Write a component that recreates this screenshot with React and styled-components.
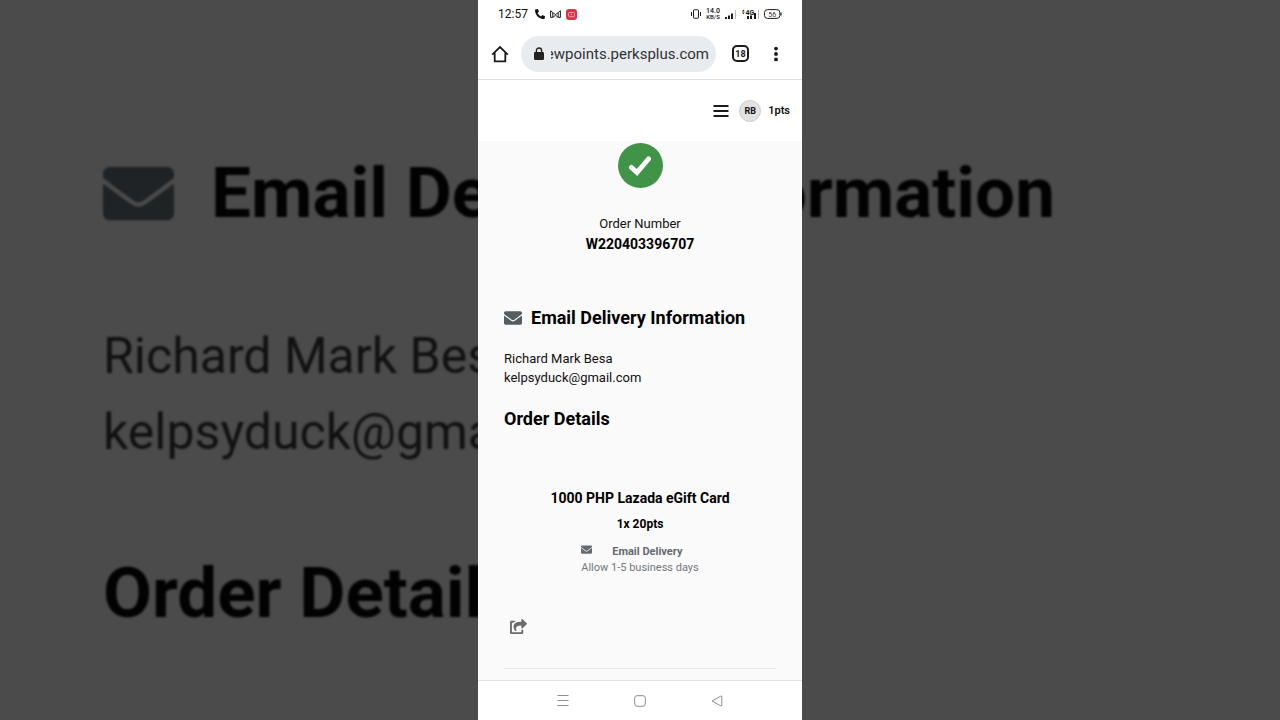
import React from 'react';
import styled, { createGlobalStyle } from 'styled-components';
import { FaEnvelope, FaPhoneAlt, FaShareSquare } from 'react-icons/fa';

const GlobalStyle = createGlobalStyle`
  * {
    box-sizing: border-box;
  }

  body {
    margin: 0;
    background: #4b4b4b;
    color: #111;
    font-family: Roboto, "Liberation Sans", sans-serif;
  }

  h1, h2, h3, p {
    margin: 0;
  }
`;

const Stage = styled.div`
  display: grid;
  grid-template-columns: minmax(0, 1fr) 324px minmax(0, 1fr);
  min-height: 100vh;
`;

/* dimmed, enlarged page on either side of the phone */
const Side = styled.div`
  padding-top: 149px;
  overflow: hidden;
  white-space: nowrap;
`;

const LeftSide = styled(Side)`
  padding-left: 103px;
`;

const RightSide = styled(Side)`
  display: flex;
  align-items: flex-start;
  justify-content: flex-end;
  padding-right: 225px;
`;

const SideTitle = styled.div`
  display: flex;
  align-items: center;
  gap: 37px;
  color: #020202;
  font-size: 71px;
  font-weight: 700;
  line-height: 88px;
  filter: blur(1px);

  svg {
    flex: none;
    color: #1f2325;
  }
`;

const SideText = styled.div`
  margin: 81px 0 79px;
  color: #111;
  font-size: 50px;
  line-height: 76px;
  filter: blur(1px);
`;

const Phone = styled.div`
  display: flex;
  flex-direction: column;
  background: #fff;
`;

const StatusBar = styled.div`
  display: flex;
  align-items: center;
  justify-content: space-between;
  height: 28px;
  padding: 0 20px;
`;

const StatusGroup = styled.div`
  display: flex;
  align-items: center;
  gap: 5px;
`;

const Clock = styled.span`
  margin-right: 2px;
  font-size: 12px;
`;

const NetSpeed = styled.span`
  display: flex;
  flex-direction: column;
  align-items: center;
  font-size: 7px;
  font-weight: 500;
  line-height: 6px;
`;

const SpeedUnit = styled.span`
  font-size: 6px;
`;

const BrowserBar = styled.div`
  display: flex;
  align-items: center;
  height: 52px;
  padding: 0 24px 0 13px;
  border-bottom: 1px solid #dcdddf;
`;

const IconButton = styled.button`
  display: flex;
  align-items: center;
  justify-content: center;
  padding: 0;
  border: 0;
  background: none;
  color: ${(props) => props.$color || '#1b1b1b'};
  cursor: pointer;
`;

const AddressBar = styled.label`
  display: flex;
  flex: 1;
  align-items: center;
  gap: 6px;
  min-width: 0;
  height: 36px;
  margin: 0 16px 0 12px;
  padding: 0 7px 0 12px;
  border-radius: 18px;
  background: #e9ecee;
`;

const AddressInput = styled.input`
  flex: 1;
  min-width: 0;
  padding: 0;
  border: 0;
  outline: 0;
  background: none;
  color: #2f3235;
  direction: rtl; /* keeps the end of the address in view */
  font: 15px Roboto, sans-serif;
`;

const TabCount = styled.span`
  display: flex;
  align-items: center;
  justify-content: center;
  width: 17px;
  height: 17px;
  border: 2px solid #1b1b1b;
  border-radius: 5px;
  font: 700 9px Roboto, sans-serif;
`;

const BrowserActions = styled.div`
  display: flex;
  gap: 25px;
`;

const SiteHeader = styled.header`
  display: flex;
  align-items: center;
  justify-content: flex-end;
  height: 61px;
  padding: 0 12px;
`;

const Avatar = styled.span`
  display: flex;
  align-items: center;
  justify-content: center;
  width: 22px;
  height: 22px;
  margin: 0 7px 0 10px;
  border: 1px solid #cfcfcf;
  border-radius: 50%;
  background: #e2e2e2;
  font-size: 9px;
  font-weight: 700;
`;

const Points = styled.span`
  font-size: 11px;
  font-weight: 600;
`;

const Main = styled.main`
  flex: 1;
  padding: 2px 26px 10px;
  background: #fafafa;
`;

const OrderSummary = styled.section`
  display: flex;
  flex-direction: column;
  align-items: center;
  font-size: 13px;
  line-height: 20px;
`;

const CheckCircle = styled.span`
  display: flex;
  align-items: center;
  justify-content: center;
  width: 45px;
  height: 45px;
  margin-bottom: 26px;
  border-radius: 50%;
  background: #419447;
  color: #fff;
`;

const OrderNumber = styled.strong`
  color: #000;
  font-size: 14px;
`;

const SectionTitle = styled.h2`
  display: flex;
  align-items: center;
  gap: 9px;
  margin-top: ${(props) => props.$top};
  color: #000;
  font-size: 18px;
  font-weight: 700;
  line-height: 24px;

  svg {
    color: #555d61;
  }
`;

const Recipient = styled.p`
  margin-top: 19px;
  font-size: 13px;
  line-height: 19px;
`;

const Product = styled.section`
  display: flex;
  flex-direction: column;
  align-items: center;
  margin-top: 57px;
`;

const ProductName = styled.h3`
  color: #000;
  font-size: 14px;
  line-height: 20px;
`;

const Quantity = styled.p`
  margin: 6px 0 10px;
  color: #000;
  font-size: 12px;
  font-weight: 700;
  line-height: 20px;
`;

const Delivery = styled.div`
  color: #73787d;
  font-size: 11px;
  line-height: 16px;
`;

const DeliveryMethod = styled.div`
  display: flex;
  gap: 20px;
  color: #646a70;
  font-weight: 700;
`;

const ShareRow = styled.div`
  display: flex;
  margin-top: 42px;
  padding: 0 6px 33px;
  border-bottom: 1px solid #e6e6e6;
`;

const NavBar = styled.nav`
  display: flex;
  align-items: center;
  justify-content: center;
  gap: 65px;
  height: 40px;
  border-top: 1px solid #e4e4e4;
`;

const VibrateIcon = () => (
  <svg width="10" height="10" viewBox="0 0 10 10" fill="none" stroke="#1b1b1b">
    <rect x="2.5" y="0.8" width="5" height="8.4" rx="0.8" />
    <path d="M0.5 3v4M9.5 3v4" />
  </svg>
);

const GmailIcon = () => (
  <svg width="11" height="8" viewBox="0 0 11 8" fill="none" stroke="#1b1b1b">
    <path d="M0.6 7.4V0.8L5.5 4.6 10.4 0.8V7.4H8.2L5.5 5.2 2.8 7.4ZM2.8 3v4.4M8.2 3v4.4" />
  </svg>
);

const RecorderIcon = () => (
  <svg width="11" height="11" viewBox="0 0 11 11">
    <rect width="11" height="11" rx="3" fill="#e0304a" />
    <rect x="2.5" y="3.5" width="6" height="4.2" rx="1" fill="none" stroke="#ffb9c2" strokeWidth="0.8" />
    <path d="M4.8 4.6v2l1.6-1z" fill="#ffb9c2" />
  </svg>
);

const SignalIcon = () => (
  <svg width="12" height="9" viewBox="0 0 12 9">
    <path d="M0 7h2v2H0zM3 5.5h2V9H3zM6 3.5h2V9H6z" fill="#1b1b1b" />
    <path d="M10 0h1v9h-1z" fill="#bbb" />
  </svg>
);

const Signal4GIcon = () => (
  <svg width="17" height="10" viewBox="0 0 17 10">
    <path d="M0 2.5 1.3 0.6 2.6 2.5zM0 3.4h2.6L1.3 5.3z" fill="#1b1b1b" />
    <text x="3.4" y="5.6" fontSize="7" fontWeight="700" fill="#1b1b1b">4G</text>
    <path d="M5 7h2v3H5zM8 6.5h2V10H8zM12 4h2v6h-2z" fill="#1b1b1b" />
    <path d="M16 1h1v9h-1z" fill="#bbb" />
  </svg>
);

const BatteryIcon = () => (
  <svg width="18" height="10" viewBox="0 0 18 10">
    <rect x="0.5" y="0.6" width="15.4" height="8.8" rx="3" fill="none" stroke="#1b1b1b" />
    <path d="M17 3.4v3.2" stroke="#1b1b1b" strokeWidth="1.2" />
    <text x="8.2" y="7.5" fontSize="7" textAnchor="middle" fill="#333">56</text>
  </svg>
);

const HomeIcon = () => (
  <svg width="18" height="18" viewBox="0 0 18 18" fill="none" stroke="currentColor" strokeWidth="1.8">
    <path d="M1.2 9.6 9 2l7.8 7.6M3.7 8v8.3h10.6V8" />
  </svg>
);

const LockIcon = () => (
  <svg width="12" height="14" viewBox="0 0 12 14">
    <rect x="1" y="5" width="10" height="8" rx="1.2" fill="#222" />
    <path d="M3.4 5.4V3.6a2.6 2.6 0 0 1 5.2 0v1.8" fill="none" stroke="#222" strokeWidth="1.4" />
  </svg>
);

const DotsIcon = () => (
  <svg width="4" height="16" viewBox="0 0 4 16" fill="currentColor">
    <circle cx="2" cy="2.6" r="1.9" />
    <circle cx="2" cy="8" r="1.9" />
    <circle cx="2" cy="13.4" r="1.9" />
  </svg>
);

const MenuIcon = () => (
  <svg width="16" height="14" viewBox="0 0 16 14" fill="none" stroke="currentColor" strokeWidth="2">
    <path d="M0.5 2h15M0.5 7h15M0.5 12h15" />
  </svg>
);

const CheckIcon = () => (
  <svg width="24" height="24" viewBox="0 0 24 24" fill="none" stroke="currentColor" strokeWidth="5" strokeLinecap="round">
    <path d="M3.5 13.5 9 18.5 20.5 5" />
  </svg>
);

const RecentsIcon = () => (
  <svg width="12" height="12" viewBox="0 0 12 12" stroke="currentColor">
    <path d="M0.5 0.5h11M0.5 5.5h11M0.5 10.5h11" />
  </svg>
);

const SquareIcon = () => (
  <svg width="12" height="12" viewBox="0 0 12 12" fill="none" stroke="currentColor">
    <rect x="0.7" y="0.7" width="10.6" height="10.6" rx="2.4" />
  </svg>
);

const BackIcon = () => (
  <svg width="12" height="12" viewBox="0 0 12 12" fill="none" stroke="currentColor" strokeLinejoin="round">
    <path d="M1 6 9.8 1.1q1-.4 1 .7v8.4q0 1.1-1 .7z" />
  </svg>
);

export default function App() {
  return (
    <Stage>
      <GlobalStyle />
      <LeftSide aria-hidden="true">
        <SideTitle>
          <FaEnvelope size={71} />
          Email De
        </SideTitle>
        <SideText>
          Richard Mark Bes
          <br />
          kelpsyduck@gma
        </SideText>
        <SideTitle>Order Detail</SideTitle>
      </LeftSide>

      <Phone>
        <StatusBar>
          <StatusGroup>
            <Clock>12:57</Clock>
            <FaPhoneAlt size={10} />
            <GmailIcon />
            <RecorderIcon />
          </StatusGroup>
          <StatusGroup>
            <VibrateIcon />
            <NetSpeed>
              14.0
              <SpeedUnit>KB/S</SpeedUnit>
            </NetSpeed>
            <SignalIcon />
            <Signal4GIcon />
            <BatteryIcon />
          </StatusGroup>
        </StatusBar>

        <BrowserBar>
          <IconButton aria-label="Home">
            <HomeIcon />
          </IconButton>
          <AddressBar>
            <LockIcon />
            <AddressInput aria-label="Address" defaultValue="ewpoints.perksplus.com" />
          </AddressBar>
          <BrowserActions>
            <IconButton aria-label="Tabs">
              <TabCount>18</TabCount>
            </IconButton>
            <IconButton aria-label="More">
              <DotsIcon />
            </IconButton>
          </BrowserActions>
        </BrowserBar>

        <SiteHeader>
          <IconButton aria-label="Menu">
            <MenuIcon />
          </IconButton>
          <Avatar>RB</Avatar>
          <Points>1pts</Points>
        </SiteHeader>

        <Main>
          <OrderSummary>
            <CheckCircle>
              <CheckIcon />
            </CheckCircle>
            <span>Order Number</span>
            <OrderNumber>W220403396707</OrderNumber>
          </OrderSummary>

          <SectionTitle $top="52px">
            <FaEnvelope size={18} />
            Email Delivery Information
          </SectionTitle>
          <Recipient>
            Richard Mark Besa
            <br />
            kelpsyduck@gmail.com
          </Recipient>

          <SectionTitle $top="20px">Order Details</SectionTitle>
          <Product>
            <ProductName>1000 PHP Lazada eGift Card</ProductName>
            <Quantity>1x 20pts</Quantity>
            <Delivery>
              <DeliveryMethod>
                <FaEnvelope size={11} />
                Email Delivery
              </DeliveryMethod>
              <p>Allow 1-5 business days</p>
            </Delivery>
          </Product>

          <ShareRow>
            <IconButton aria-label="Share" $color="#6b6b6b">
              <FaShareSquare size={17} />
            </IconButton>
          </ShareRow>
        </Main>

        <NavBar>
          <IconButton aria-label="Recent apps" $color="#8c8c8c">
            <RecentsIcon />
          </IconButton>
          <IconButton aria-label="Home screen" $color="#8c8c8c">
            <SquareIcon />
          </IconButton>
          <IconButton aria-label="Back" $color="#8c8c8c">
            <BackIcon />
          </IconButton>
        </NavBar>
      </Phone>

      <RightSide aria-hidden="true">
        <SideTitle>ormation</SideTitle>
      </RightSide>
    </Stage>
  );
}
